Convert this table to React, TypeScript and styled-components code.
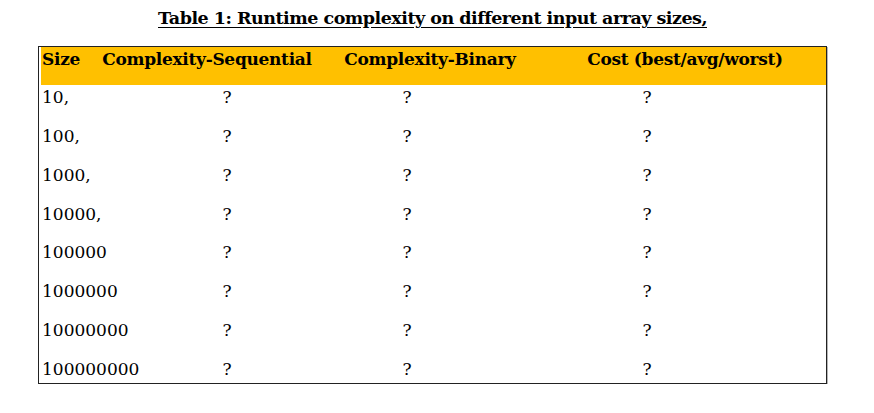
import React from 'react';
import styled, { createGlobalStyle } from 'styled-components';

const sizes = ['10,', '100,', '1000,', '10000,', '100000', '1000000', '10000000', '100000000'];

const GlobalStyle = createGlobalStyle`
  html, body {
    margin: 0;
    padding: 0;
    background: #ffffff;
  }
  body {
    font-family: "DejaVu Serif", "Liberation Serif", serif;
    color: #000;
  }
`;

const Page = styled.div`
  width: 789px;
  padding: 6px 0 0 38px;
`;

const Caption = styled.h1`
  margin: 0 0 16px;
  font-size: 17.5px;
  letter-spacing: -0.5px;
  line-height: 24px;
  font-weight: bold;
  text-align: center;
  text-decoration: underline;
  text-underline-offset: 3px;
  white-space: nowrap;
`;

const Table = styled.div`
  border: 1px solid #222;
  box-shadow: 1px 1px 0 #b5b5b5;
  padding: 0 0 2px 0;
`;

const HeadRow = styled.div`
  display: grid;
  grid-template-columns: 61px 208px 238px 272px;
  height: 38px;
  margin: 0 0 0 2px;
  padding-left: 1px;
  background: #ffc000;
  font-weight: bold;
  font-size: 17px;
  letter-spacing: -0.3px;
  line-height: 24px;
`;

const HeadCell = styled.div<{ $center?: boolean }>`
  display: flex;
  justify-content: ${(p) => (p.$center ? 'center' : 'flex-start')};
  white-space: nowrap;
`;

const Body = styled.div`
  display: grid;
  grid-auto-rows: 24px;
  row-gap: 14.86px;
  padding-left: 3px;
  font-size: 17px;
  line-height: 24px;
`;

const Row = styled.div`
  display: grid;
  grid-template-columns: 145px 80px 280px 200px;
`;

const Cell = styled.div<{ $center?: boolean }>`
  text-align: ${(p) => (p.$center ? 'center' : 'left')};
  white-space: nowrap;
`;

export default function App() {
  return (
    <>
      <GlobalStyle />
      <Page>
        <Caption>Table 1: Runtime complexity on different input array sizes,</Caption>
        <Table>
          <HeadRow>
            <HeadCell>Size</HeadCell>
            <HeadCell $center>Complexity-Sequential</HeadCell>
            <HeadCell $center>Complexity-Binary</HeadCell>
            <HeadCell $center>Cost (best/avg/worst)</HeadCell>
          </HeadRow>
          <Body>
            {sizes.map((s) => (
              <Row key={s}>
                <Cell>{s}</Cell>
                <Cell $center>?</Cell>
                <Cell $center>?</Cell>
                <Cell $center>?</Cell>
              </Row>
            ))}
          </Body>
        </Table>
      </Page>
    </>
  );
}
